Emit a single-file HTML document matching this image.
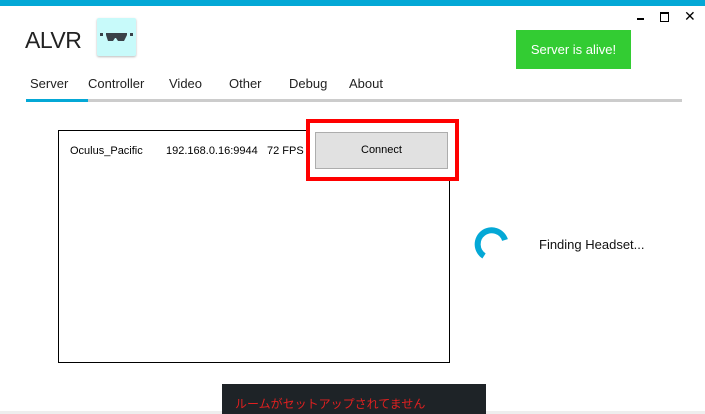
<!DOCTYPE html>
<html><head><meta charset="utf-8"><style>
body{margin:0;width:705px;height:414px;background:#fff;position:relative;overflow:hidden;font-family:"Liberation Sans","Noto Sans CJK JP",sans-serif;}
.a{position:absolute;}
</style></head><body>
<div class="a" style="left:0;top:0;width:705px;height:6px;background:#04a8d6"></div>
<div class="a" style="left:25px;top:27px;font-size:23px;color:#222;letter-spacing:-0.5px;font-weight:300">ALVR</div>
<div class="a" style="left:97px;top:18px;width:39px;height:38px;background:#c8fafa;border-radius:2px;box-shadow:0 1px 2px #bbb"></div>
<svg class="a" style="left:97px;top:18px" width="39" height="38"><path d="M9 15h21v2l-3 6h-6l-2-3h-1l-2 3h-5l-2-6z" fill="#3a4148"/><rect x="3" y="15" width="3" height="3" fill="#3a4148"/><rect x="33" y="15" width="3" height="3" fill="#3a4148"/></svg>
<div class="a" style="left:637px;top:18px;width:7px;height:2px;background:#000"></div>
<div class="a" style="left:660px;top:12px;width:7px;height:7px;border:1.5px solid #000;border-top-width:2.5px"></div>
<div class="a" style="left:684px;top:8px;font-size:14px">✕</div>
<div class="a" style="left:516px;top:30px;width:115px;height:39px;background:#33cc33;color:#fff;font-size:13px;line-height:39px;text-align:center">Server is alive!</div>
<div class="a" style="top:76px;font-size:13px;color:#222;left:30px">Server</div>
<div class="a" style="top:76px;font-size:13px;color:#222;left:88px">Controller</div>
<div class="a" style="top:76px;font-size:13px;color:#222;left:169px">Video</div>
<div class="a" style="top:76px;font-size:13px;color:#222;left:229px">Other</div>
<div class="a" style="top:76px;font-size:13px;color:#222;left:289px">Debug</div>
<div class="a" style="top:76px;font-size:13px;color:#222;left:349px">About</div>
<div class="a" style="left:26px;top:99px;width:656px;height:3px;background:#ccc"></div>
<div class="a" style="left:26px;top:99px;width:62px;height:3px;background:#04a8d6"></div>
<div class="a" style="left:58px;top:130px;width:390px;height:231px;border:1px solid #000"></div>
<div class="a" style="left:70px;top:145px;font-size:11px;color:#000">Oculus_Pacific</div>
<div class="a" style="left:166px;top:145px;font-size:11px;color:#000">192.168.0.16:9944</div>
<div class="a" style="left:267px;top:145px;font-size:11px;color:#000">72 FPS</div>
<div class="a" style="left:306px;top:119px;width:145px;height:54px;border:4px solid #ff0000;background:#fff"></div>
<div class="a" style="left:315px;top:132px;width:131px;height:35px;border:1px solid #adadad;background:#e1e1e1;font-size:11px;line-height:35px;text-align:center">Connect</div>
<svg class="a" style="left:470px;top:222px" width="45" height="45"><path d="M35 18 A14 14 0 1 0 14 34" fill="none" stroke="#04a8d6" stroke-width="6"/></svg>
<div class="a" style="left:539px;top:237px;font-size:13px;color:#111">Finding Headset...</div>
<div class="a" style="left:222px;top:384px;width:264px;height:30px;background:#1e2327"></div>
<div class="a" style="left:235px;top:395px;font-size:12px;color:#e02020">ルームがセットアップされてません</div>
<div class="a" style="left:0;top:411px;width:705px;height:3px;background:#eee;z-index:-1"></div>
</body></html>
